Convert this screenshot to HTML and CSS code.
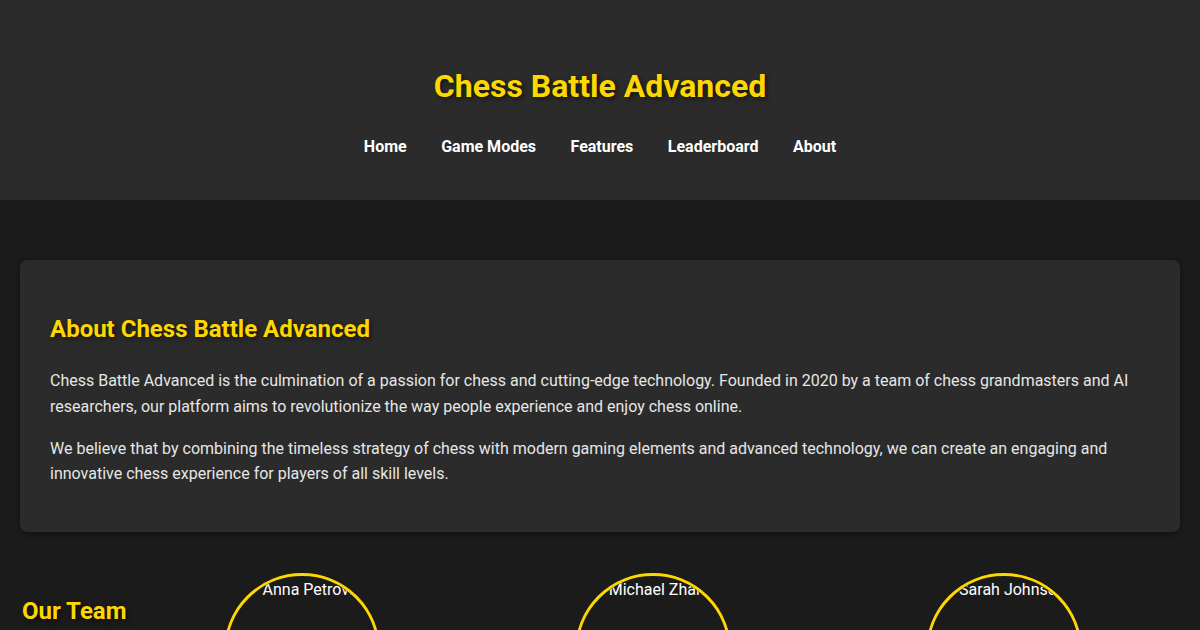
FILE: index.html
```html
<!DOCTYPE html>
<html lang="en">
<head>
<meta charset="utf-8">
<title>About - Chess Battle Advanced</title>
<link rel="stylesheet" href="styles.css">
</head>
<body>
<header class="site-header">
  <h1 class="site-title">Chess Battle Advanced</h1>
  <nav>
    <ul class="nav-list">
      <li><a href="#">Home</a></li>
      <li><a href="#">Game Modes</a></li>
      <li><a href="#">Features</a></li>
      <li><a href="#">Leaderboard</a></li>
      <li><a href="#">About</a></li>
    </ul>
  </nav>
</header>
<main class="content">
  <section class="card">
    <h2 class="section-title">About Chess Battle Advanced</h2>
    <p>Chess Battle Advanced is the culmination of a passion for chess and cutting-edge technology. Founded in 2020 by a team of chess grandmasters and AI researchers, our platform aims to revolutionize the way people experience and enjoy chess online.</p>
    <p>We believe that by combining the timeless strategy of chess with modern gaming elements and advanced technology, we can create an engaging and innovative chess experience for players of all skill levels.</p>
  </section>
  <section class="team">
    <h2 class="section-title team-title">Our Team</h2>
    <div class="team-grid">
      <div class="member"><div class="avatar"><span class="avatar-alt">Anna Petrova</span></div></div>
      <div class="member"><div class="avatar"><span class="avatar-alt">Michael Zhang</span></div></div>
      <div class="member"><div class="avatar"><span class="avatar-alt">Sarah Johnson</span></div></div>
    </div>
  </section>
</main>
</body>
</html>
```

FILE: styles.css
```css
html, body {
  margin: 0;
  padding: 0;
}

body {
  background: #1b1b1b;
  color: #e6e6e6;
  font-family: Roboto, "Liberation Sans", sans-serif;
  font-size: 16px;
  line-height: 1.6;
}

.site-header {
  background: #2b2b2b;
  height: 200px;
  box-sizing: border-box;
  padding: 60px 20px 0;
  text-align: center;
}

.site-title {
  margin: 0;
  font-size: 32px;
  line-height: 52px;
  font-weight: 700;
  color: #ffd700;
  text-shadow: 2px 2px 4px rgba(0, 0, 0, 0.55);
}

.nav-list {
  list-style: none;
  margin: 22px 0 0;
  padding: 0;
  display: flex;
  justify-content: center;
  gap: 34.5px;
  line-height: 25.6px;
}

.nav-list a {
  color: #ffffff;
  text-decoration: none;
  font-weight: 700;
}

.content {
  padding: 60px 20px 40px;
}

.card {
  background: #2b2b2b;
  border-radius: 8px;
  padding: 30px 30px 29px;
  box-shadow: 0 2px 6px rgba(0, 0, 0, 0.35);
}

.section-title {
  color: #ffd700;
  font-size: 24px;
  font-weight: 700;
  margin: 20px 0;
  text-shadow: 2px 2px 4px rgba(0, 0, 0, 0.55);
}

.card p {
  margin: 0 0 16px;
}

.team {
  display: flex;
  align-items: flex-start;
  margin-top: 41px;
}

.team-title {
  flex: none;
  margin: 19px 0 0 2px;
}

.team-grid {
  flex: 1;
  display: grid;
  grid-template-columns: repeat(3, 1fr);
}

.member {
  display: flex;
  justify-content: center;
}

.avatar {
  width: 150px;
  height: 150px;
  border: 3px solid #ffd700;
  border-radius: 50%;
  overflow: hidden;
  display: flex;
  justify-content: center;
}

.avatar-alt {
  flex: none;
  white-space: nowrap;
  color: #ffffff;
  line-height: 28px;
  padding-left: 16px;
}
```
